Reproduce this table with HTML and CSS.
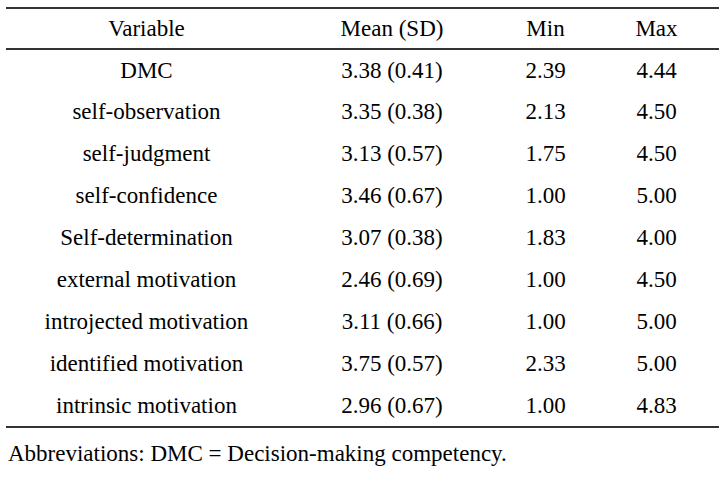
FILE: index.html
```html
<!DOCTYPE html>
<html>
<head>
<meta charset="utf-8">
<link rel="stylesheet" href="styles.css">
</head>
<body>
<div class="page">
  <table class="stats">
    <colgroup>
      <col class="c-var"><col class="c-mean"><col class="c-min"><col class="c-max">
    </colgroup>
    <thead>
      <tr><th>Variable</th><th>Mean (SD)</th><th>Min</th><th>Max</th></tr>
    </thead>
    <tbody>
      <tr><td>DMC</td><td>3.38 (0.41)</td><td>2.39</td><td>4.44</td></tr>
      <tr><td>self-observation</td><td>3.35 (0.38)</td><td>2.13</td><td>4.50</td></tr>
      <tr><td>self-judgment</td><td>3.13 (0.57)</td><td>1.75</td><td>4.50</td></tr>
      <tr><td>self-confidence</td><td>3.46 (0.67)</td><td>1.00</td><td>5.00</td></tr>
      <tr><td>Self-determination</td><td>3.07 (0.38)</td><td>1.83</td><td>4.00</td></tr>
      <tr><td>external motivation</td><td>2.46 (0.69)</td><td>1.00</td><td>4.50</td></tr>
      <tr><td>introjected motivation</td><td>3.11 (0.66)</td><td>1.00</td><td>5.00</td></tr>
      <tr><td>identified motivation</td><td>3.75 (0.57)</td><td>2.33</td><td>5.00</td></tr>
      <tr><td>intrinsic motivation</td><td>2.96 (0.67)</td><td>1.00</td><td>4.83</td></tr>
    </tbody>
  </table>
  <p class="note">Abbreviations: DMC = Decision-making competency.</p>
</div>
</body>
</html>
```
FILE: styles.css
```css
body {
  margin: 0;
  font-family: "Times New Roman", serif;
}
.page {
  padding-top: 7px;
  font-family: "Times New Roman", serif;
  font-size: 23px;
}
.stats {
  margin-left: 6px;
  width: 713px;
  border-collapse: collapse;
  table-layout: fixed;
  border-top: 2px solid #333333;
  border-bottom: 2px solid #333333;
  font-family: "Times New Roman", serif;
}
.c-var { width: 281px; }
.c-mean { width: 210px; }
.c-min { width: 97px; }
.c-max { width: 125px; }
.stats th,
.stats td {
  font-family: "Times New Roman", serif;
  font-size: 23px;
  font-weight: normal;
  padding: 0;
  text-align: center;
  vertical-align: middle;
  white-space: nowrap;
}
.stats thead tr {
  height: 41px;
  border-bottom: 2px solid #333333;
}
.stats tbody tr {
  height: 42px;
}
.note {
  font-family: "Times New Roman", serif;
  font-size: 23px;
  margin: 13px 0 0 8px;
  line-height: 26px;
}
```
